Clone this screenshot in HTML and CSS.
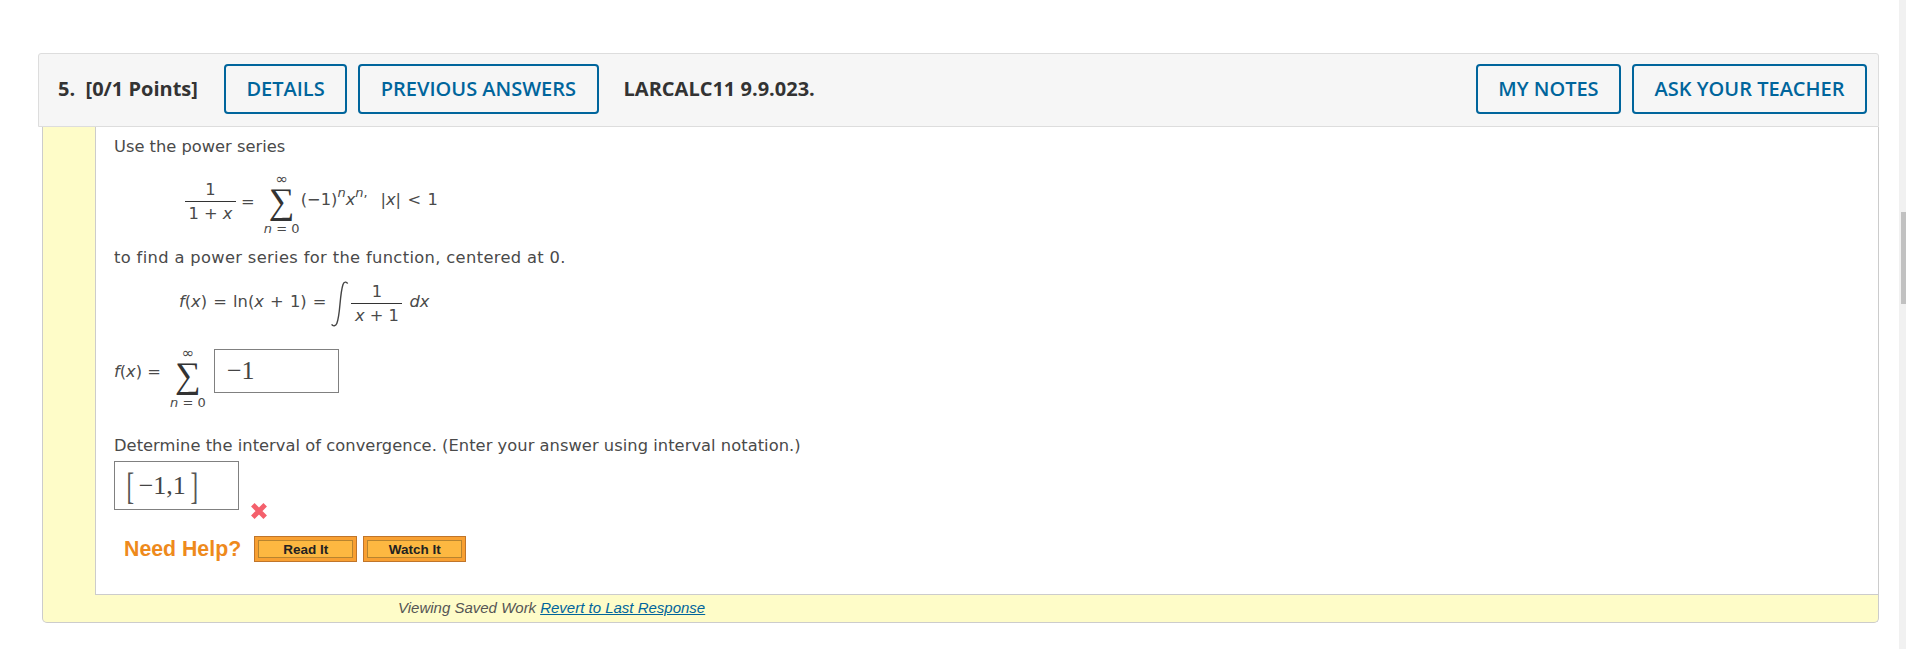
FILE: index.html
```html
<!DOCTYPE html>
<html lang="en">
<head>
<meta charset="utf-8">
<title>Question 5</title>
<link rel="stylesheet" href="styles.css">
</head>
<body>
<div class="page">
  <main class="question">
    <header class="qhead">
      <strong class="qnum">5.&nbsp; [0/1 Points]</strong>
      <a class="btn">DETAILS</a>
      <a class="btn">PREVIOUS ANSWERS</a>
      <strong class="qref">LARCALC11 9.9.023.</strong>
      <span class="spacer"></span>
      <a class="btn">MY NOTES</a>
      <a class="btn">ASK YOUR TEACHER</a>
    </header>
    <div class="qbody">
      <div class="content">
        <p class="intro">Use the power series</p>
        <div class="eq eq-series">
          <span class="frac frac-series"><span class="num">1</span><span class="den">1 + <i>x</i></span></span>
          <span class="eqs">=</span>
          <span class="sum"><span class="lim lim-top">∞</span><span class="sigma">∑</span><span class="lim"><i>n</i> = 0</span></span>
          <span class="term">(−1)<sup><i>n</i></sup><i>x</i><sup><i>n</i>,</sup> &nbsp;|<i>x</i>| &lt; 1</span>
        </div>
        <p class="find">to find a power series for the function, centered at 0.</p>
        <div class="eq eq-int">
          <span class="lhs"><i>f</i>(<i>x</i>) = ln(<i>x</i> + 1) =</span>
          <svg class="integral" viewBox="0 0 19 46" aria-hidden="true"><path d="M17.6 2.6 C16.6 0.4 14 0.6 13 3.4 C11.8 7 10.8 14 10 23 C9.2 32 8.2 39 6.8 42.6 C5.8 45.2 3 45.6 1.6 43.4"/></svg>
          <span class="frac frac-int"><span class="num">1</span><span class="den"><i>x</i> + 1</span></span>
          <span class="dx"><i>dx</i></span>
        </div>
        <div class="eq eq-answer">
          <span class="fx"><i>f</i>(<i>x</i>) =</span>
          <span class="sum"><span class="lim lim-top">∞</span><span class="sigma">∑</span><span class="lim"><i>n</i> = 0</span></span>
          <span class="answer answer-series">−1</span>
        </div>
        <p class="determine">Determine the interval of convergence. (Enter your answer using interval notation.)</p>
        <div class="answer-row">
          <span class="answer answer-interval"><span class="bracket">[</span>−1,1<span class="bracket">]</span></span>
          <svg class="wrong" viewBox="0 0 16 16" aria-label="Incorrect"><path d="M2.5 2.5 L13.5 13.5 M13.5 2.5 L2.5 13.5"/></svg>
        </div>
        <div class="help">
          <span class="help-label">Need Help?</span>
          <a class="help-btn">Read It</a>
          <a class="help-btn">Watch It</a>
        </div>
      </div>
      <footer class="saved"><em>Viewing Saved Work</em> <a class="revert">Revert to Last Response</a></footer>
    </div>
  </main>
  <aside class="scrollbar"><div class="thumb"></div></aside>
</div>
</body>
</html>
```
FILE: styles.css
```css
* { box-sizing: border-box; }
html, body { margin: 0; height: 100%; overflow: hidden; background: #fff; }
body { font-family: "DejaVu Sans", Verdana, sans-serif; font-size: 16.3px; line-height: 20px; color: #4a4a4a; }
.page { display: flex; height: 649px; }
.question { flex: 1; padding: 53px 20px 0 38px; min-width: 0; }
.qhead {
  display: flex; align-items: center; height: 74px;
  padding: 0 11px 2px 19px;
  background: #f6f6f6; border: 1px solid #ddd; border-radius: 3px 3px 0 0;
  font-family: "Open Sans", sans-serif;
}
.qnum { font-size: 20px; font-weight: 700; color: #333; margin-right: 26px; }
.qref { font-size: 20px; font-weight: 700; color: #333; margin-left: 25px; }
.spacer { flex: 1; }
.btn {
  display: flex; align-items: center; justify-content: center; height: 50px;
  padding: 0 20.5px; margin-left: 11px;
  border: 2px solid #00659c; border-radius: 4px;
  color: #00659c; font-size: 20px; font-weight: 600;
}
.qnum + .btn { margin-left: 0; }
.qbody {
  margin-left: 4px; background-color: #fefcc8;
  border: 1px solid #ccc; border-top: 0; border-radius: 0 0 5px 5px;
  padding-left: 52px;
}
.content { background: #fff; border: 1px solid #ccc; border-width: 0 0 1px 1px; height: 468px; padding: 10px 0 0 18px; }
p { margin: 0; }
.eq { display: flex; align-items: center; }
.eq-series { margin: 15px 0 0 71px; height: 64px; }
.frac { display: inline-flex; flex-direction: column; align-items: center; width: 51px; text-align: center; }
.frac-series { margin-bottom: 4px; }
.num { display: block; width: 100%; border-bottom: 1px solid #333; line-height: 21px; padding-bottom: 1px; }
.den { line-height: 24px; }
.eqs { margin: 0 7px 4px 5px; }
.sum { display: inline-flex; flex-direction: column; align-items: center; font-size: 13px; line-height: 13px; width: 40px; }
.sigma { display: block; height: 34px; font: 36px/27px "Liberation Serif", serif; color: #333; }
.lim { display: block; }
.lim-top { font-size: 15px; margin-bottom: 2px; }
sup { font-size: 13px; line-height: 0; vertical-align: 8px; }
.term { margin: 0 0 8px -1px; white-space: nowrap; word-spacing: 1.2px; }
.find { margin-top: 12px; letter-spacing: .35px; }
.eq-int { margin: 12px 0 0 65px; height: 48px; }
.lhs { margin-right: 4px; margin-bottom: 4px; word-spacing: 1px; }
.integral { width: 19px; height: 46px; margin-right: 2px; }
.integral path { fill: none; stroke: #444; stroke-width: 1.4; }
.dx { margin: 0 0 4px 7px; }
.eq-answer { margin-top: 20px; height: 60px; }
.fx { margin: 0 7px 12px 0; }
.answer {
  display: inline-flex; align-items: center; border: 1px solid #808080;
  font-family: "Liberation Serif", serif; background: #fff; color: #444;
}
.answer-series { width: 125px; height: 44px; padding-left: 12px; font-size: 26px; align-self: flex-start; margin: 1px 0 0 6px; }
.determine { margin-top: 28px; letter-spacing: .04px; }
.answer-row { display: flex; margin-top: 5px; height: 75px; }
.answer-interval { width: 125px; height: 49px; padding-left: 7px; font-size: 26px; }
.bracket { font-size: 38px; transform: scaleX(.6); line-height: 1; margin: 0 2px; color: #555; }
.wrong { width: 18px; height: 18px; margin: 41px 0 0 11px; }
.wrong path { stroke: #f4606c; stroke-width: 4.4; fill: none; }
.help { display: flex; align-items: center; margin: 0 0 0 10px; font-family: "Liberation Sans", sans-serif; }
.help-label { font-size: 21.3px; font-weight: 700; color: #ee8a1c; margin-right: 13px; }
.help-btn {
  display: flex; align-items: center; justify-content: center; width: 103px; height: 26px;
  margin-right: 6px; padding-top: 1px; background: #fdb841; border: 1px solid #c0752a;
  box-shadow: inset 0 0 0 3px #f8a032, inset 0 0 0 4px #b8842e;
  font-size: 13.5px; font-weight: 700; color: #222;
}
.saved {
  height: 27px; padding: 0 0 2px 303px; display: flex; align-items: center; gap: 4px;
  font: italic 15px "Liberation Sans", sans-serif; color: #555;
}
.revert { color: #00659c; text-decoration: underline; }
.scrollbar { width: 7px; background: #f1f1f1; padding: 212px 0 0 2px; }
.thumb { height: 92px; background: #c1c1c1; }
```
